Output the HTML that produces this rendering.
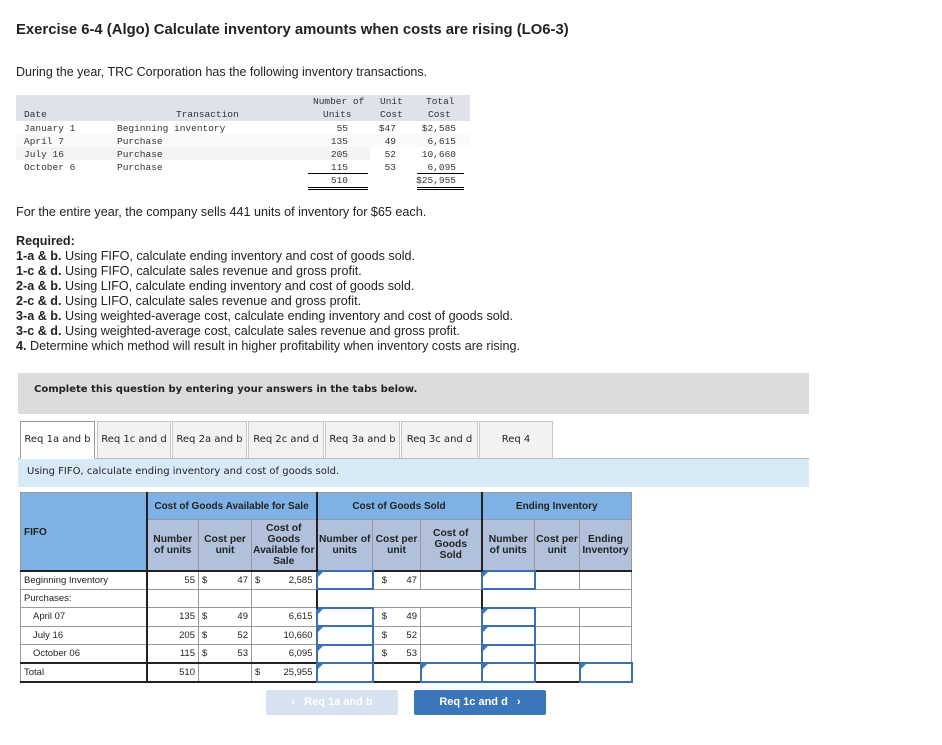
<!DOCTYPE html>
<html><head><meta charset="utf-8"><style>
*{margin:0;padding:0;box-sizing:border-box}
body{width:942px;height:745px;background:#fff;position:relative;font-family:"Liberation Sans",sans-serif;color:#222;overflow:hidden}
.a{position:absolute;white-space:nowrap}
.mono{font-family:"Liberation Mono",monospace;font-size:9.5px;color:#333}
.req{font-size:12.6px;line-height:15px}
.tab{position:absolute;top:421px;height:38px;border:1px solid #c8c8c8;background:#f2f2f2;font-family:"DejaVu Sans",sans-serif;font-size:10px;text-align:center;line-height:36px;color:#222}
table.m{position:absolute;left:20px;top:492px;border-collapse:collapse;table-layout:fixed;font-size:9.5px;font-family:"Liberation Sans",sans-serif}
table.m td{border:1px solid #999;padding:0 3px;overflow:hidden;white-space:nowrap}
.h1{background:#7eb1e5;font-weight:bold;text-align:center;height:27px;font-size:10px}
.h2{background:#b1c1dc;font-weight:bold;text-align:center;line-height:11px;height:51px;white-space:normal!important;font-size:10.3px;padding:0 1px!important}
.r td{height:18.5px}
.in{border:2px solid #3a6fb0!important;position:relative}
.in:before{content:"";position:absolute;left:0;top:0;border-left:5px solid #3a78c0;border-bottom:5px solid transparent}
.num{text-align:right}
.bl{border-left:2px solid #222!important}
</style></head><body>
<div class="a" style="left:16px;top:22px;font-size:14.85px;font-weight:bold;color:#222">Exercise 6-4 (Algo) Calculate inventory amounts when costs are rising (LO6-3)</div>
<div class="a" style="left:16px;top:65px;font-size:12.5px">During the year, TRC Corporation has the following inventory transactions.</div>

<div class="a" style="left:16px;top:95px;width:454px;height:26px;background:#dfe2ea"></div>
<div class="a" style="left:16px;top:147px;width:354px;height:13px;background:#f4f4f4"></div>
<div class="a" style="left:16px;top:134px;width:454px;height:13px;background:#fafafa"></div>
<div class="a" style="left:16px;top:121px;width:454px;height:13px;background:#fff"></div>
<div class="a mono" style="left:313px;top:96px">Number of</div>
<div class="a mono" style="left:380px;top:96px">Unit</div>
<div class="a mono" style="left:426px;top:96px">Total</div>
<div class="a mono" style="left:24px;top:109px">Date</div>
<div class="a mono" style="left:176px;top:109px">Transaction</div>
<div class="a mono" style="left:323px;top:109px">Units</div>
<div class="a mono" style="left:380px;top:109px">Cost</div>
<div class="a mono" style="left:428px;top:109px">Cost</div>
<div class="a mono" style="left:24px;top:122px;line-height:13px">January 1<br>April 7<br>July 16<br>October 6</div>
<div class="a mono" style="left:117px;top:122px;line-height:13px">Beginning inventory<br>Purchase<br>Purchase<br>Purchase</div>
<div class="a mono" style="left:310px;width:38px;top:122px;line-height:13px;text-align:right">55<br>135<br>205<br>115</div>
<div class="a mono" style="left:370px;width:26px;top:122px;line-height:13px;text-align:right">$47<br>49<br>52<br>53</div>
<div class="a mono" style="left:410px;width:46px;top:122px;line-height:13px;text-align:right">$2,585<br>6,615<br>10,660<br>6,095</div>
<div class="a" style="left:308px;top:173px;width:60px;border-top:1.5px solid #000"></div>
<div class="a" style="left:417px;top:173px;width:47px;border-top:1.5px solid #000"></div>
<div class="a mono" style="left:310px;width:38px;top:175px;text-align:right">510</div>
<div class="a mono" style="left:410px;width:46px;top:175px;text-align:right">$25,955</div>
<div class="a" style="left:308px;top:187px;width:60px;height:3px;border-top:1px solid #000;border-bottom:1px solid #000"></div>
<div class="a" style="left:417px;top:187px;width:47px;height:3px;border-top:1px solid #000;border-bottom:1px solid #000"></div>

<div class="a" style="left:16px;top:205px;font-size:12.6px">For the entire year, the company sells 441 units of inventory for $65 each.</div>
<div class="a req" style="left:16px;top:234px"><b>Required:</b><br><b>1-a &amp; b.</b> Using FIFO, calculate ending inventory and cost of goods sold.<br><b>1-c &amp; d.</b> Using FIFO, calculate sales revenue and gross profit.<br><b>2-a &amp; b.</b> Using LIFO, calculate ending inventory and cost of goods sold.<br><b>2-c &amp; d.</b> Using LIFO, calculate sales revenue and gross profit.<br><b>3-a &amp; b.</b> Using weighted-average cost, calculate ending inventory and cost of goods sold.<br><b>3-c &amp; d.</b> Using weighted-average cost, calculate sales revenue and gross profit.<br><b>4.</b> Determine which method will result in higher profitability when inventory costs are rising.</div>

<div class="a" style="left:18px;top:373px;width:791px;height:41px;background:#dcdcdc"></div>
<div class="a" style="left:34px;top:384px;font-family:'DejaVu Sans',sans-serif;font-weight:bold;font-size:10px">Complete this question by entering your answers in the tabs below.</div>

<div class="tab" style="left:20px;width:75px;background:#fff;border-color:#999;border-bottom-color:#fff;z-index:2">Req 1a and b</div>
<div class="tab" style="left:97px;width:74px">Req 1c and d</div>
<div class="tab" style="left:172px;width:75px">Req 2a and b</div>
<div class="tab" style="left:248px;width:76px">Req 2c and d</div>
<div class="tab" style="left:325px;width:75px">Req 3a and b</div>
<div class="tab" style="left:401px;width:77px">Req 3c and d</div>
<div class="tab" style="left:479px;width:74px">Req 4</div>
<div class="a" style="left:18px;top:458px;width:791px;height:29px;background:#d9eaf7;border-top:1px solid #bbb"></div>
<div class="a" style="left:27px;top:466px;font-family:'DejaVu Sans',sans-serif;font-size:10px">Using FIFO, calculate ending inventory and cost of goods sold.</div>

<table class="m">
<colgroup><col style="width:126px"><col style="width:52px"><col style="width:53px"><col style="width:65px"><col style="width:56px"><col style="width:48px"><col style="width:61px"><col style="width:53px"><col style="width:45px"><col style="width:52px"></colgroup>
<tr><td class="h1" rowspan="2" style="text-align:left;vertical-align:top;padding-top:34px;border-left:1px solid #999">FIFO</td><td class="h1 bl" colspan="3">Cost of Goods Available for Sale</td><td class="h1 bl" colspan="3">Cost of Goods Sold</td><td class="h1 bl" colspan="3">Ending Inventory</td></tr>
<tr><td class="h2 bl">Number of units</td><td class="h2">Cost per unit</td><td class="h2">Cost of Goods Available for Sale</td><td class="h2 bl">Number of units</td><td class="h2">Cost per unit</td><td class="h2" style="padding:0 12px!important">Cost of Goods Sold</td><td class="h2 bl">Number of units</td><td class="h2">Cost per unit</td><td class="h2">Ending Inventory</td></tr>
<tr class="r" style="border-top:2px solid #222"><td>Beginning Inventory</td><td class="num bl">55</td><td>$<span style="float:right">47</span></td><td>$<span style="float:right">2,585</span></td><td class="in"></td><td>&nbsp; $<span style="float:right">47</span></td><td></td><td class="in"></td><td></td><td></td></tr>
<tr class="r"><td>Purchases:</td><td class="bl"></td><td></td><td></td><td colspan="3" style="border-left:2px solid #222"></td><td colspan="3" class="bl"></td></tr>
<tr class="r"><td style="padding-left:12px">April 07</td><td class="num bl">135</td><td>$<span style="float:right">49</span></td><td class="num">6,615</td><td class="in"></td><td>&nbsp; $<span style="float:right">49</span></td><td></td><td class="in"></td><td></td><td></td></tr>
<tr class="r"><td style="padding-left:12px">July 16</td><td class="num bl">205</td><td>$<span style="float:right">52</span></td><td class="num">10,660</td><td class="in"></td><td>&nbsp; $<span style="float:right">52</span></td><td></td><td class="in"></td><td></td><td></td></tr>
<tr class="r"><td style="padding-left:12px">October 06</td><td class="num bl">115</td><td>$<span style="float:right">53</span></td><td class="num">6,095</td><td class="in"></td><td>&nbsp; $<span style="float:right">53</span></td><td></td><td class="in"></td><td></td><td></td></tr>
<tr class="r" style="border-top:2px solid #222;border-bottom:2px solid #222"><td>Total</td><td class="num bl">510</td><td></td><td>$<span style="float:right">25,955</span></td><td class="in"></td><td></td><td class="in"></td><td class="in"></td><td></td><td class="in"></td></tr>
</table>

<div class="a" style="left:266px;top:690px;width:132px;height:25px;background:#d6e2f0;border-radius:2px;color:#fff;font-weight:bold;font-size:11px;text-align:center;line-height:25px">&lsaquo;&nbsp;&nbsp; Req 1a and b</div>
<div class="a" style="left:414px;top:690px;width:132px;height:25px;background:#3a76b9;border-radius:2px;color:#fff;font-weight:bold;font-size:11px;text-align:center;line-height:25px">Req 1c and d &nbsp;&nbsp;&rsaquo;</div>
</body></html>
